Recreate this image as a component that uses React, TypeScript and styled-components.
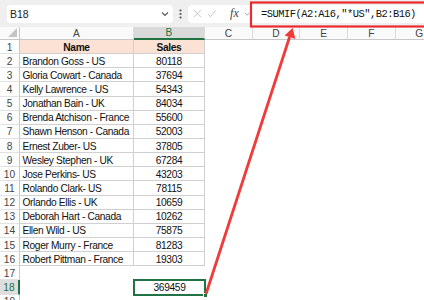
import { FC } from 'react';
import styled, { createGlobalStyle } from 'styled-components';

const Global = createGlobalStyle`
  html, body {
    margin: 0;
    padding: 0;
    background: #fff;
    overflow: hidden;
  }
  #root {
    width: 424px;
    height: 300px;
    overflow: hidden;
  }
`;

const font = `'Liberation Sans', Arial, sans-serif`;
const green = '#217346';

const Page = styled.div`
  position: relative;
  width: 424px;
  height: 300px;
  overflow: hidden;
  font-family: ${font};
  color: #111;
`;

const Bar = styled.div`
  display: flex;
  align-items: center;
  height: 27px;
  box-sizing: border-box;
  padding-left: 7px;
  background: #efefef;
`;

const NameBox = styled.div`
  display: flex;
  align-items: center;
  justify-content: space-between;
  width: 166px;
  height: 18px;
  box-sizing: border-box;
  padding: 0 4px 0 3px;
  background: #fff;
  border-radius: 4px;
  font-size: 10.5px;
  color: #222;
`;

const Dots = styled.div`
  display: flex;
  justify-content: center;
  width: 15px;
`;

const EditBox = styled.div`
  display: flex;
  align-items: center;
  width: 62px;
  height: 18px;
  box-sizing: border-box;
  padding-left: 5px;
  gap: 5px;
  background: #fff;
  border-radius: 4px 0 0 4px;
`;

const Fx = styled.span`
  margin-left: 9px;
  font-family: 'Liberation Serif', serif;
  font-style: italic;
  font-size: 12px;
  color: #444;
`;

const Formula = styled.div`
  flex: 1;
  display: flex;
  align-items: center;
  height: 18px;
  padding-left: 11px;
  background: #fff;
  font-family: 'Liberation Mono', monospace;
  font-size: 10.4px;
  letter-spacing: -0.5px;
  color: #111;
  white-space: nowrap;
`;

const Grid = styled.div`
  display: grid;
  grid-template-columns: 20px 114px 71px repeat(5, 47.7px);
  grid-template-rows: 13px repeat(19, 14.15px);
  font-size: 10.2px;
  letter-spacing: -0.35px;
`;

const Corner = styled.div`
  position: relative;
  background: #fafafa;
  border-right: 1px solid #c8c8c8;
  border-bottom: 1px solid #c8c8c8;
`;

const CornerMark = styled.svg`
  position: absolute;
  right: 2px;
  bottom: 2px;
`;

const ColHead = styled.div<{ selected?: boolean }>`
  display: flex;
  align-items: center;
  justify-content: center;
  box-sizing: border-box;
  background: ${({ selected }) => (selected ? '#d9d9d9' : '#fafafa')};
  color: ${({ selected }) => (selected ? green : '#444')};
  border-right: 1px solid #dcdcdc;
  border-bottom: ${({ selected }) =>
    selected ? `2px solid ${green}` : '1px solid #c8c8c8'};
  letter-spacing: 0;
`;

const RowHead = styled.div<{ selected?: boolean }>`
  display: flex;
  align-items: center;
  justify-content: center;
  box-sizing: border-box;
  padding-top: 1px;
  background: ${({ selected }) => (selected ? '#dedede' : '#fff')};
  color: ${({ selected }) => (selected ? green : '#444')};
  border-bottom: 1px solid #e2e2e2;
  border-right: ${({ selected }) =>
    selected ? `2px solid ${green}` : '1px solid #c8c8c8'};
  letter-spacing: 0;
`;

const Cell = styled.div<{
  boxed?: boolean;
  head?: boolean;
  center?: boolean;
  active?: boolean;
}>`
  position: relative;
  display: flex;
  align-items: center;
  justify-content: ${({ center }) => (center ? 'center' : 'flex-start')};
  box-sizing: border-box;
  padding: 1px 0 0 ${({ center }) => (center ? '0' : '2.5px')};
  white-space: nowrap;
  font-weight: ${({ head }) => (head ? 700 : 400)};
  background: ${({ head }) => (head ? '#fbe2d5' : 'transparent')};
  border-right: ${({ boxed }) => (boxed ? '1px solid #d0d0d0' : 'none')};
  border-bottom: ${({ boxed }) => (boxed ? '1px solid #d0d0d0' : 'none')};
  outline: ${({ active }) => (active ? `2px solid ${green}` : 'none')};
  outline-offset: -1px;
`;

const Handle = styled.span`
  position: absolute;
  right: -3px;
  bottom: -3px;
  width: 5px;
  height: 5px;
  background: ${green};
  border: 1px solid #fff;
  box-sizing: border-box;
`;

const Overlay = styled.svg`
  position: absolute;
  left: 0;
  top: 0;
  pointer-events: none;
`;

const rows: [string, number][] = [
  ['Brandon Goss - US', 80118],
  ['Gloria Cowart - Canada', 37694],
  ['Kelly Lawrence - US', 54343],
  ['Jonathan Bain - UK', 84034],
  ['Brenda Atchison - France', 55600],
  ['Shawn Henson - Canada', 52003],
  ['Ernest Zuber- US', 37805],
  ['Wesley Stephen - UK', 67284],
  ['Jose Perkins- US', 43203],
  ['Rolando Clark- US', 78115],
  ['Orlando Ellis - UK', 10659],
  ['Deborah Hart - Canada', 10262],
  ['Ellen Wild - US', 75875],
  ['Roger Murry - France', 81283],
  ['Robert Pittman - France', 19303],
];

const letters = ['A', 'B', 'C', 'D', 'E', 'F', 'G'];
// =SUMIF(A2:A16,"*US",B2:B16)
const total = rows
  .filter(r => r[0].endsWith('US'))
  .reduce((s, r) => s + r[1], 0);

const Chevron: FC<{ color?: string }> = ({ color = '#555' }) => (
  <svg width="8" height="6" viewBox="0 0 8 6">
    <path d="M1 1.5 L4 4.5 L7 1.5" fill="none" stroke={color} strokeWidth="1.1" />
  </svg>
);

const FormulaBar: FC = () => (
  <Bar>
    <NameBox>
      <span>B18</span>
      <Chevron />
    </NameBox>
    <Dots>
      <svg width="3" height="10" viewBox="0 0 3 10">
        <circle cx="1.5" cy="1.5" r="1.1" fill="#555" />
        <circle cx="1.5" cy="5" r="1.1" fill="#555" />
        <circle cx="1.5" cy="8.5" r="1.1" fill="#555" />
      </svg>
    </Dots>
    <EditBox>
      <svg width="11" height="11" viewBox="0 0 11 11">
        <path d="M1 1 L10 10 M10 1 L1 10" stroke="#bdbdbd" strokeWidth="1.1" />
      </svg>
      <svg width="12" height="11" viewBox="0 0 12 11">
        <path d="M1 6 L4.5 9.5 L11 1.5" fill="none" stroke="#bdbdbd" strokeWidth="1.1" />
      </svg>
      <Fx>fx</Fx>
      <Chevron color="#999" />
    </EditBox>
    <Formula>=SUMIF(A2:A16,"*US",B2:B16)</Formula>
  </Bar>
);

const Sheet: FC = () => {
  const cells = [];
  cells.push(
    <Corner key="corner">
      <CornerMark width="9" height="9" viewBox="0 0 9 9">
        <path d="M9 0 L9 9 L0 9 Z" fill="#c4c4c4" />
      </CornerMark>
    </Corner>,
  );
  letters.forEach(l =>
    cells.push(
      <ColHead key={l} selected={l === 'B'}>
        {l}
      </ColHead>,
    ),
  );
  for (let r = 1; r <= 19; r++) {
    cells.push(
      <RowHead key={`r${r}`} selected={r === 18}>
        {r}
      </RowHead>,
    );
    letters.forEach((l, i) => {
      const key = `${l}${r}`;
      if (r === 1 && i < 2) {
        cells.push(
          <Cell key={key} boxed head center>
            {i === 0 ? 'Name' : 'Sales'}
          </Cell>,
        );
      } else if (r <= 16 && i < 2) {
        const row = rows[r - 2];
        cells.push(
          <Cell key={key} boxed center={i === 1}>
            {i === 0 ? row[0] : row[1]}
          </Cell>,
        );
      } else if (r === 18 && i === 1) {
        cells.push(
          <Cell key={key} center active>
            {total}
            <Handle />
          </Cell>,
        );
      } else {
        cells.push(<Cell key={key} />);
      }
    });
  }
  return <Grid>{cells}</Grid>;
};

const Annotation: FC = () => (
  <Overlay width="424" height="300" viewBox="0 0 424 300">
    <rect x="251" y="2.5" width="176" height="24" fill="none" stroke="#ea2a2f" strokeWidth="2.2" />
    <line x1="206" y1="294" x2="289.6" y2="37" stroke="#f03b3b" strokeWidth="2.8" />
    <path d="M292.6 28 L295.4 39 L284.6 35.6 Z" fill="#f03b3b" />
  </Overlay>
);

const App: FC = () => (
  <Page>
    <Global />
    <FormulaBar />
    <Sheet />
    <Annotation />
  </Page>
);

export default App;
